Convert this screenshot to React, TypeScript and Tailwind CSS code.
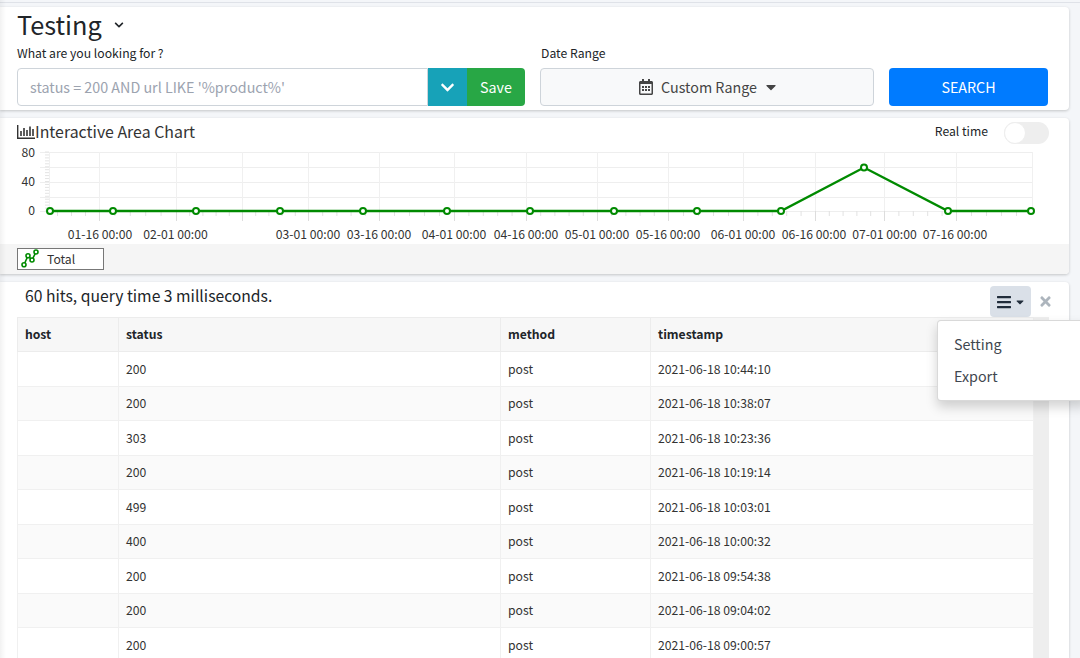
import React from "react";
import { FaBars, FaCaretDown, FaChevronDown, FaRegCalendarAlt, FaTimes } from "react-icons/fa";

const font = "[font-family:'Noto_Sans_CJK_SC','Noto_Sans',sans-serif]";

const majors = [99, 176, 242, 308, 379, 454, 526, 597, 668, 743, 815, 884, 956];
const xLabels: [number, string][] = [
  [100, "01-16 00:00"], [175.5, "02-01 00:00"], [308, "03-01 00:00"], [379, "03-16 00:00"],
  [454, "04-01 00:00"], [526, "04-16 00:00"], [597, "05-01 00:00"], [668, "05-16 00:00"],
  [743, "06-01 00:00"], [814, "06-16 00:00"], [884.5, "07-01 00:00"], [955, "07-16 00:00"],
];
const pts: [number, number][] = [
  [50, 211], [113, 211], [196, 211], [280, 211], [363, 211], [447, 211], [530, 211],
  [614, 211], [697, 211], [781, 211], [864, 167.5], [948, 211], [1031, 211],
];
const rows: [string, string][] = [
  ["200", "2021-06-18 10:44:10"], ["200", "2021-06-18 10:38:07"], ["303", "2021-06-18 10:23:36"],
  ["200", "2021-06-18 10:19:14"], ["499", "2021-06-18 10:03:01"], ["400", "2021-06-18 10:00:32"],
  ["200", "2021-06-18 09:54:38"], ["200", "2021-06-18 09:04:02"], ["200", "2021-06-18 09:00:57"],
];

function minorX(): number[] {
  const out: number[] = [57, 71, 85];
  for (let i = 0; i < majors.length - 1; i++) {
    const step = (majors[i + 1] - majors[i]) / 5;
    for (let k = 1; k < 5; k++) out.push(majors[i] + step * k);
  }
  for (let k = 1; k < 5; k++) out.push(956 + 15 * k);
  return out;
}

function Chart() {
  const minorY = Array.from({ length: 21 }, (_, i) => 152 + i * 2.95);
  return (
    <svg viewBox="0 145 1069 99" className="block h-[99px] w-[1069px] overflow-visible">
      {[152, 167, 182, 197, 211].map((y) => (
        <line key={y} x1={40} x2={1032} y1={y + 0.5} y2={y + 0.5} stroke="#eeeeee" />
      ))}
      {[49, ...majors, 1032].map((x) => (
        <line key={x} x1={x + 0.5} x2={x + 0.5} y1={152} y2={211} stroke="#f0f0f0" />
      ))}
      {majors.map((x) => (
        <line key={x} x1={x + 0.5} x2={x + 0.5} y1={211} y2={221} stroke="#dddddd" />
      ))}
      {minorX().map((x) => (
        <line key={x} x1={x + 0.5} x2={x + 0.5} y1={211} y2={216} stroke="#e2e2e2" />
      ))}
      {minorY.map((y) => (
        <line key={y} x1={45} x2={49} y1={y} y2={y} stroke="#e4e4e4" />
      ))}
      {[["80", 152], ["40", 181], ["0", 210]].map(([t, y]) => (
        <text key={t} x={35} y={Number(y) + 4.5} textAnchor="end" fontSize={12.2} fill="#333" fontFamily="'Noto Sans CJK SC',sans-serif">
          {t}
        </text>
      ))}
      {xLabels.map(([x, t]) => (
        <text key={t} x={x} y={238.5} textAnchor="middle" fontSize={12.2} fill="#333" fontFamily="'Noto Sans CJK SC',sans-serif">
          {t}
        </text>
      ))}
      <polyline points={pts.map((p) => p.join(",")).join(" ")} fill="none" stroke="#008a00" strokeWidth={2.4} />
      {pts.map(([x, y]) => (
        <circle key={x} cx={x} cy={y} r={3} fill="#fff" stroke="#008a00" strokeWidth={2} />
      ))}
    </svg>
  );
}

export default function App() {
  return (
    <div className={`relative flex h-[658px] w-[1080px] flex-col overflow-hidden bg-[#f4f6f9] text-[#212529] ${font}`}>
      <div className="h-[3px] shrink-0 border-b border-[#dfe2e8]" />
      <div className="pointer-events-none absolute inset-y-0 left-0 z-10 w-[6px] bg-gradient-to-r from-black/5 to-transparent" />

      {/* Search card */}
      <section className="mt-[4px] h-[103px] w-[1069px] shrink-0 rounded-r-[4px] bg-white px-[17px] shadow-[0_1px_3px_rgba(0,0,0,0.2)]">
        <div className="flex h-[35px] items-center">
          <h1 className="mt-[-2px] text-[25.3px] leading-[34px] font-normal">Testing</h1>
          <FaChevronDown className="ml-[12px] text-[10px]" />
        </div>
        <div className="flex gap-[15px]">
          <div className="w-[508px]">
            <label className="block h-[26px] text-[12.2px] leading-[23px]">What are you looking for ?</label>
            <div className="flex h-[38px]">
              <div className="flex min-w-0 flex-1 items-center rounded-l-[4px] border border-[#ced4da] px-3 text-[14.3px] text-[#9ca3af]">
                status = 200 AND url LIKE '%product%'
              </div>
              <div className="flex w-[39px] items-center justify-center bg-[#17a2b8] text-[15px] text-white">
                <FaChevronDown />
              </div>
              <div className="flex w-[58px] items-center justify-center rounded-r-[4px] bg-[#28a745] text-[14.3px] text-white">
                Save
              </div>
            </div>
          </div>
          <div className="w-[334px]">
            <label className="block h-[26px] pl-px text-[12.2px] leading-[23px]">Date Range</label>
            <div className="flex h-[38px] items-center justify-center rounded-[4px] border border-[#ced4da] bg-[#f8f9fa] pl-[3px] text-[14.3px] text-[#444]">
              <FaRegCalendarAlt className="mr-[7px] text-[16px]" />
              Custom Range
              <FaCaretDown className="ml-[6px] text-[16px]" />
            </div>
          </div>
          <div className="w-[159px] pt-[26px]">
            <button className="h-[38px] w-full rounded-[4px] bg-[#007bff] text-[14.3px] text-white">SEARCH</button>
          </div>
        </div>
      </section>

      {/* Chart card */}
      <section className="mt-[8px] h-[156px] w-[1069px] shrink-0 rounded-r-[4px] bg-white shadow-[0_1px_3px_rgba(0,0,0,0.2)]">
        <div className="flex h-[27px] items-center justify-between pl-[17px] pr-[20px]">
          <div className="flex items-center text-[15.9px] leading-[27px] text-[#333]">
            <svg viewBox="0 0 18 14" className="h-[14px] w-[18px]" fill="#333">
              <path d="M0 0h1.4v12.6H18V14H0z" />
              <path d="M3.2 6h1.6v5H3.2zM6.2 3h1.6v8H6.2zM9.2 5h1.6v6H9.2zM12.2 1.5h1.6V11h-1.6zM15.2 4h1.6v7h-1.6z" />
            </svg>
            Interactive Area Chart
          </div>
          <div className="flex items-center">
            <span className="mr-[16px] text-[12.2px]">Real time</span>
            <div className="mt-[2px] flex h-[22px] w-[45px] items-center rounded-full bg-[#eeeeee]">
              <div className="h-[22px] w-[22px] rounded-full border border-[#eeeeee] bg-white" />
            </div>
          </div>
        </div>
        <Chart />
        <div className="h-[30px] rounded-br-[4px] bg-[#f5f5f5] px-[17px] pt-[4px]">
          <div className="flex h-[22px] w-[87px] items-center border border-[#777] bg-white pl-[3px]">
            <svg viewBox="0 0 20 20" className="h-[20px] w-[20px]" fill="#fff" stroke="#008a00" strokeWidth={1.6}>
              <path d="M3 15.7L7 6.7 11 11 15 3" fill="none" />
              <circle cx="3" cy="15.7" r="2" />
              <circle cx="7" cy="6.7" r="2" />
              <circle cx="11" cy="11" r="2" />
              <circle cx="15" cy="3" r="2" />
            </svg>
            <span className="ml-[6px] mt-[1px] text-[12.2px] text-[#333]">Total</span>
          </div>
        </div>
      </section>

      {/* Results card */}
      <section className="mt-[8px] w-[1069px] flex-1 rounded-tr-[4px] bg-white pl-[17px] shadow-[0_1px_3px_rgba(0,0,0,0.2)]">
        <div className="flex h-[35px] w-[1033px] items-start justify-between">
          <span className="ml-[8px] mt-[1px] text-[15.7px] leading-[25px]">60 hits, query time 3 milliseconds.</span>
          <div className="flex items-center">
            <button className="mt-[4px] flex h-[31px] w-[41px] items-center justify-center gap-[2px] rounded-[4px] bg-[#dae0e8] text-[#212d3b]">
              <FaBars className="text-[16px]" />
              <FaCaretDown className="text-[12px]" />
            </button>
            <FaTimes className="ml-[7px] mr-[-3px] mt-[4px] text-[15px] text-[#adb5bd]" />
          </div>
        </div>
        <div className="flex h-[341px] w-[1032px] overflow-hidden">
          <table className="w-[1016px] shrink-0 table-fixed border-collapse self-start text-[12.2px] text-[#333]">
            <colgroup>
              <col className="w-[101px]" />
              <col className="w-[382px]" />
              <col className="w-[150px]" />
              <col className="w-[383px]" />
            </colgroup>
            <thead>
              <tr className="h-[34px] bg-[#f7f7f7] text-left font-bold text-[#212529]">
                {["host", "status", "method", "timestamp"].map((h) => (
                  <th key={h} className="border border-[#ececec] px-[7px] py-0">{h}</th>
                ))}
              </tr>
            </thead>
            <tbody>
              {rows.map(([status, ts], i) => (
                <tr key={i} className={`h-[34.5px] ${i % 2 === 1 ? "bg-[#fafafa]" : "bg-white"}`}>
                  <td className="border border-[#f0f0f0] px-[7px] py-0" />
                  <td className="border border-[#f0f0f0] px-[7px] py-0">{status}</td>
                  <td className="border border-[#f0f0f0] px-[7px] py-0">post</td>
                  <td className="border border-[#f0f0f0] px-[7px] py-0">{ts}</td>
                </tr>
              ))}
            </tbody>
          </table>
          <div className="flex-1 bg-[#eeeeee]" />
        </div>
      </section>

      {/* Open menu */}
      <div className="absolute left-[937px] top-[320px] z-20 h-[81px] w-[150px] rounded-[4px] border border-black/15 bg-white py-[8px] pl-[16px] text-[14.3px] text-[#3f474f] shadow-[0_6px_12px_rgba(0,0,0,0.175)]">
        <div className="h-[32px] leading-[30px]">Setting</div>
        <div className="h-[32px] leading-[30px]">Export</div>
      </div>
    </div>
  );
}
